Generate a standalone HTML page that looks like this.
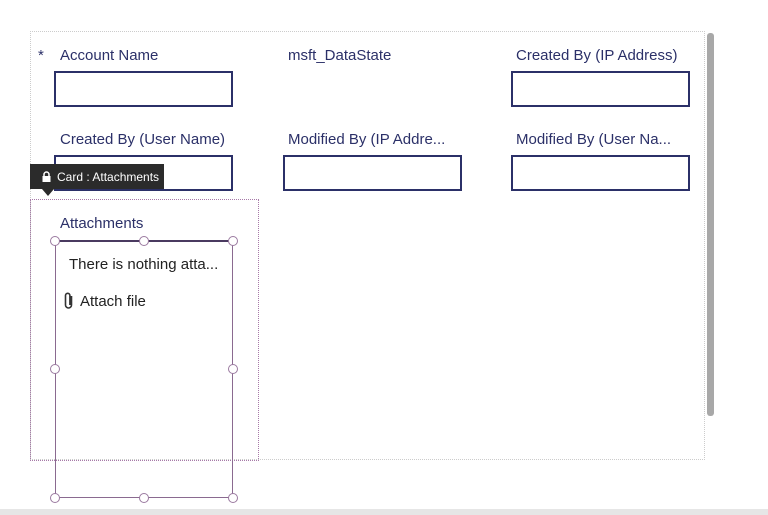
<!DOCTYPE html><html><head><style>
body{margin:0;width:768px;height:515px;background:#fff;position:relative;overflow:hidden;font-family:"Liberation Sans",sans-serif}
.a{position:absolute}
.lbl{position:absolute;color:#2b3068;font-size:15px;white-space:nowrap}
.inp{position:absolute;border:2px solid #2b3068;box-sizing:border-box;width:179px;height:36px;background:#fff}
.h{position:absolute;width:8px;height:8px;border:1px solid #9b7aa0;border-radius:50%;background:#fff;margin:-5px 0 0 -5px}
</style></head><body>
<div class="a" style="left:30px;top:31px;width:675px;height:429px;border:1px dotted #ccc;box-sizing:border-box"></div>
<div class="a" style="left:707px;top:33px;width:7px;height:383px;background:#a8a8a8;border-radius:3px"></div>
<div class="a" style="left:0;top:509px;width:768px;height:6px;background:#e6e6e6"></div>
<div class="lbl" style="left:38px;top:47px">*</div>
<div class="lbl" style="left:60px;top:47px">Account Name</div>
<div class="lbl" style="left:288px;top:47px">msft_DataState</div>
<div class="lbl" style="left:516px;top:47px">Created By (IP Address)</div>
<div class="inp" style="left:54px;top:71px"></div>
<div class="inp" style="left:511px;top:71px"></div>
<div class="lbl" style="left:60px;top:131px">Created By (User Name)</div>
<div class="lbl" style="left:288px;top:131px">Modified By (IP Addre...</div>
<div class="lbl" style="left:516px;top:131px">Modified By (User Na...</div>
<div class="inp" style="left:54px;top:155px"></div>
<div class="inp" style="left:283px;top:155px"></div>
<div class="inp" style="left:511px;top:155px"></div>
<div class="a" style="left:30px;top:199px;width:229px;height:262px;border:1px dotted #a77aa8;box-sizing:border-box"></div>
<div class="a" style="left:30px;top:164px;width:134px;height:25px;background:#2b2b2b;color:#fff;font-size:12px;line-height:26px">
<svg class="a" style="left:12px;top:7px" width="9" height="11" viewBox="0 0 9 11"><path d="M2 5V3.5a2.5 2.5 0 0 1 5 0V5" stroke="#fff" stroke-width="1.5" fill="none"/><rect x="0.5" y="5" width="8" height="6" fill="#fff"/></svg>
<span style="position:absolute;left:27px">Card : Attachments</span></div>
<div class="a" style="left:42px;top:189px;width:0;height:0;border-left:6px solid transparent;border-right:6px solid transparent;border-top:7px solid #2b2b2b"></div>
<div class="lbl" style="left:60px;top:215px">Attachments</div>
<div class="a" style="left:55px;top:240px;width:178px;height:258px;border:1px solid #8a6a90;border-top:2px solid #4a3a60;box-sizing:border-box"></div>
<div class="a" style="left:69px;top:256px;font-size:15px;color:#222">There is nothing atta...</div>
<svg class="a" style="left:63px;top:291px" width="12" height="20" viewBox="0 0 12 20"><path d="M8.5 5v9a3 3 0 0 1-6 0V4.5a2.2 2.2 0 0 1 4.4 0v9.5" stroke="#333" stroke-width="1.6" fill="none"/></svg>
<div class="a" style="left:80px;top:293px;font-size:15px;color:#222">Attach file</div>
<div class="h" style="left:55px;top:241px"></div><div class="h" style="left:144px;top:241px"></div><div class="h" style="left:233px;top:241px"></div>
<div class="h" style="left:55px;top:369px"></div><div class="h" style="left:233px;top:369px"></div>
<div class="h" style="left:55px;top:498px"></div><div class="h" style="left:144px;top:498px"></div><div class="h" style="left:233px;top:498px"></div>
</body></html>
